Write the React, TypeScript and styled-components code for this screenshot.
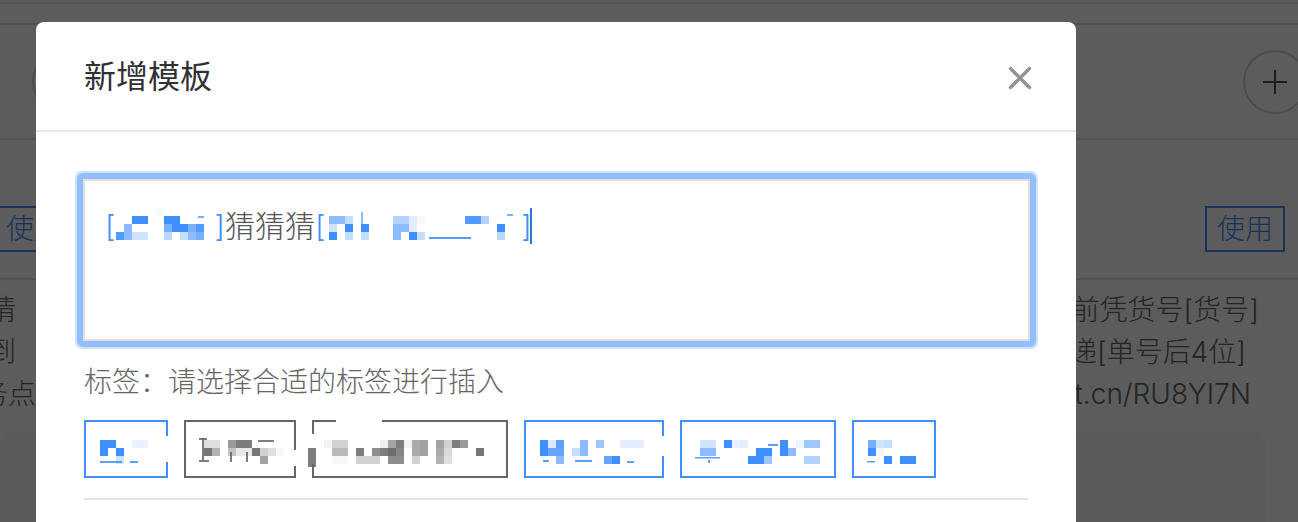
import React from "react";
import styled, { createGlobalStyle } from "styled-components";

const BLUE = "#3f8fff";
const GREY = "#666666";
const CJK = `Inter, "Noto Sans CJK SC", "Noto Sans", sans-serif`;

const GlobalStyle = createGlobalStyle`
  html, body {
    margin: 0;
    height: 100%;
    overflow: hidden;
    background: #ffffff;
    font-family: ${CJK};
    font-weight: 300;
  }
`;

const Page = styled.div`
  height: 522px;
  overflow: hidden;
  color: ${GREY};
`;

const TopStrip = styled.div<{ $height: number }>`
  height: ${(p) => p.$height}px;
  border-bottom: 2px solid #e0e0e0;
`;

const HeaderRow = styled.div`
  height: 113px;
  display: flex;
  align-items: center;
  justify-content: space-between;
  border-bottom: 2px solid #e0e0e0;
  padding-left: 32px;
  margin-right: -9px;
`;

const AddCircle = styled.div`
  width: 60px;
  height: 60px;
  border: 2px solid #d4d4d4;
  border-radius: 50%;
  display: flex;
  align-items: center;
  justify-content: center;
`;

const ActionRow = styled.div`
  height: 72px;
  padding-top: 66px;
  display: flex;
  align-items: flex-start;
  justify-content: space-between;
  border-bottom: 2px solid #e0e0e0;
  margin-left: -6px;
  padding-right: 13px;
`;

const UseButton = styled.div`
  box-sizing: border-box;
  width: 80px;
  height: 46px;
  border: 2px solid ${BLUE};
  color: ${BLUE};
  font-size: 28px;
  line-height: 42px;
  text-align: center;
`;

const TextRow = styled.div`
  padding-top: 9px;
  display: flex;
  justify-content: space-between;
`;

const TextColumn = styled.div<{ $width: number }>`
  width: ${(p) => p.$width}px;
  overflow: hidden;
`;

const TextLine = styled.div<{ $inset: number }>`
  display: flex;
  justify-content: flex-end;
  padding-right: ${(p) => p.$inset}px;
  font-size: 28px;
  line-height: 42px;
  height: 42px;
  white-space: nowrap;
`;

const BottomCard = styled.div`
  height: 200px;
  margin: 17px 33px 0 0;
  background: #f8f8f8;
  border-radius: 10px;
`;

const Overlay = styled.div`
  position: fixed;
  inset: 0;
  background: rgba(0, 0, 0, 0.64);
  padding: 22px 0 0 36px;
  overflow: hidden;
`;

const Modal = styled.div`
  width: 1040px;
  height: 700px;
  background: #ffffff;
  border-radius: 8px;
`;

const ModalHeader = styled.div`
  height: 106px;
  padding: 2px 44px 0 48px;
  display: flex;
  align-items: center;
  justify-content: space-between;
  border-bottom: 2px solid #e8e8e8;
`;

const ModalTitle = styled.div`
  font-size: 32px;
  line-height: 44px;
  font-weight: 400;
  color: #303133;
`;

const CloseIcon = styled.svg`
  display: block;
  width: 24px;
  height: 24px;
  margin-top: 2px;
`;

const ModalBody = styled.div`
  padding: 47px 48px 0 47px;
`;

const Editor = styled.div`
  box-sizing: border-box;
  width: 947px;
  height: 162px;
  border: 2px solid #dcdfe6;
  border-radius: 2px;
  box-shadow: 0 0 0 6px #92bffc, 0 0 0 8px #cfe2fe;
  padding: 25px 20px;
  font-size: 30px;
  line-height: 40px;
  color: #555555;
`;

const EditorLine = styled.div`
  height: 40px;
  display: flex;
  align-items: center;
  white-space: nowrap;
`;

const Bracket = styled.span`
  color: ${BLUE};
`;

const Caret = styled.span`
  width: 2px;
  height: 36px;
  background: #2f74d8;
  margin-left: -2px;
`;

const HintLabel = styled.div`
  margin: 21px 0 18px 1px;
  font-size: 28px;
  line-height: 40px;
  color: #666666;
  white-space: nowrap;
`;

const TagRow = styled.div`
  display: flex;
  gap: 16px;
  padding-left: 1px;
`;

const Tag = styled.div<{ $width: number; $color: string }>`
  position: relative;
  box-sizing: border-box;
  width: ${(p) => p.$width}px;
  height: 58px;
  border: 2px solid ${(p) => p.$color};
`;

const TagArt = styled.svg`
  position: absolute;
  top: -2px;
  left: -2px;
  width: calc(100% + 4px);
  height: 58px;
  overflow: visible;
`;

const Divider = styled.div`
  height: 2px;
  margin: 20px 0 0 1px;
  background: #e4e4e4;
`;

const InlineArt = styled.svg<{ $width: number }>`
  display: block;
  flex: none;
  width: ${(p) => p.$width}px;
  height: 40px;
  overflow: visible;
`;

// [column, row, strength] of a blurred-out cell
type Cell = [number, number, number];

const CELL = 8;

const Cells = ({
  cells,
  color,
  x,
  y,
}: {
  cells: Cell[];
  color: string;
  x: number;
  y: number;
}) => (
  <>
    {cells.map(([col, row, level], i) => (
      <rect
        key={i}
        x={x + col * CELL}
        y={y + row * CELL}
        width={CELL}
        height={CELL}
        fill={color}
        opacity={level}
      />
    ))}
  </>
);

const firstMosaic: Cell[] = [
  [5, 0, 0.05],
  [2, 1, 1], [3, 1, 1], [6, 1, 1], [7, 1, 1],
  [1, 2, 0.6], [6, 2, 0.7], [7, 2, 1], [8, 2, 1], [9, 2, 0.7], [10, 2, 0.9],
  [0, 3, 0.9], [1, 3, 0.6], [2, 3, 0.25], [3, 3, 0.25], [6, 3, 0.35], [8, 3, 0.3], [9, 3, 0.6], [10, 3, 0.7],
];

const secondMosaic: Cell[] = [
  [0, 1, 0.6], [1, 1, 0.6], [2, 1, 0.3], [8, 1, 0.4], [9, 1, 0.4], [10, 1, 0.15], [11, 1, 0.05],
  [17, 1, 0.9], [18, 1, 0.9], [19, 1, 0.4],
  [0, 2, 0.25], [2, 2, 1], [4, 2, 1], [8, 2, 0.6], [9, 2, 0.6], [10, 2, 0.15], [21, 2, 1],
  [0, 3, 1], [2, 3, 0.3], [4, 3, 0.3], [8, 3, 0.6], [10, 3, 1], [11, 3, 0.3], [21, 3, 0.35],
];

interface TagDef {
  width: number;
  color: string;
  originX: number;
  cells: Cell[];
  gaps: [number, number, number, number][];
  strokes?: [number, number, number, number][];
}

const tags: TagDef[] = [
  {
    width: 84,
    color: BLUE,
    originX: 16,
    cells: [
      [0, 0, 1], [1, 0, 1], [4, 0, 0.12], [5, 0, 0.12],
      [0, 1, 1], [2, 1, 1],
      [2, 2, 0.25],
    ],
    gaps: [[80, 16, 6, 26]],
    strokes: [[16, 41, 22, 2], [46, 41, 8, 2]],
  },
  {
    width: 112,
    color: GREY,
    originX: 20,
    cells: [
      [0, 0, 0.2], [1, 0, 0.2], [3, 0, 0.65], [4, 0, 0.85], [5, 0, 0.85],
      [0, 1, 0.9], [1, 1, 0.5], [3, 1, 0.4], [4, 1, 0.15], [5, 1, 0.15], [6, 1, 0.9], [7, 1, 0.3], [8, 1, 0.2], [9, 1, 0.05],
      [7, 2, 0.6],
    ],
    gaps: [[108, 30, 6, 16]],
    strokes: [
      [15, 18, 8, 2], [18, 18, 2, 22], [15, 40, 10, 2],
      [46, 32, 2, 10], [62, 32, 2, 10], [74, 20, 16, 2],
    ],
  },
  {
    width: 196,
    color: GREY,
    originX: 12,
    cells: [
      [0, 0, 0.08], [1, 0, 0.3], [2, 0, 0.3], [7, 0, 0.1], [8, 0, 0.6], [9, 0, 0.85], [10, 0, 0.08], [11, 0, 0.55], [12, 0, 0.6],
      [14, 0, 0.6], [15, 0, 0.3], [16, 0, 0.85], [17, 0, 0.65],
      [1, 1, 0.45], [2, 1, 0.45], [4, 1, 0.85], [6, 1, 0.75], [7, 1, 0.85], [8, 1, 0.95], [9, 1, 0.8], [11, 1, 0.55], [12, 1, 0.6],
      [14, 1, 0.55], [15, 1, 0.25], [19, 1, 0.9],
      [1, 2, 0.05], [2, 2, 0.05], [4, 2, 0.3], [5, 2, 0.3], [6, 2, 0.3], [8, 2, 0.75], [9, 2, 0.75], [11, 2, 0.3], [14, 2, 0.5], [15, 2, 0.2],
    ],
    gaps: [
      [24, -2, 46, 6],
      [-2, 14, 6, 30],
    ],
    strokes: [[-4, 28, 8, 19]],
  },
  {
    width: 140,
    color: BLUE,
    originX: 16,
    cells: [
      [0, 0, 1], [1, 0, 0.2], [2, 0, 0.85], [5, 0, 0.6], [7, 0, 0.5], [10, 0, 0.15], [11, 0, 0.15], [12, 0, 0.15],
      [0, 1, 1], [1, 1, 0.8], [2, 1, 0.8], [4, 1, 0.3], [5, 1, 0.6],
      [2, 2, 0.6], [8, 2, 0.8], [9, 2, 1],
    ],
    gaps: [[136, 16, 6, 20]],
    strokes: [[19, 40, 6, 2], [51, 40, 17, 2], [103, 41, 7, 2]],
  },
  {
    width: 156,
    color: BLUE,
    originX: 20,
    cells: [
      [0, 0, 0.25], [1, 0, 0.25], [3, 0, 1], [4, 0, 0.12], [5, 0, 0.15], [10, 0, 1], [12, 0, 0.1], [13, 0, 0.5], [14, 0, 0.5],
      [0, 1, 0.6], [1, 1, 0.6], [7, 1, 1], [8, 1, 1], [10, 1, 1], [11, 1, 0.6],
      [6, 2, 1], [7, 2, 1], [8, 2, 0.5], [13, 2, 0.4], [14, 2, 0.4],
    ],
    gaps: [],
    strokes: [[15, 37, 25, 1.5], [28, 40, 2, 3], [88, 24, 10, 2]],
  },
  {
    width: 84,
    color: BLUE,
    originX: 16,
    cells: [
      [0, 0, 0.7], [1, 0, 0.25], [2, 0, 0.3],
      [0, 1, 1], [1, 1, 0.08],
      [2, 2, 1], [4, 2, 1], [5, 2, 1],
    ],
    gaps: [],
    strokes: [[15, 41, 8, 1.5]],
  },
];

const App = (): React.ReactElement => {
  return (
    <>
      <GlobalStyle />
      <Page>
        <TopStrip $height={2} />
        <TopStrip $height={19} />
        <HeaderRow>
          <AddCircle />
          <AddCircle>
            <svg width="26" height="26" viewBox="0 0 26 26">
              <path d="M13 1v24M1 13h24" stroke="#505050" strokeWidth="2" fill="none" />
            </svg>
          </AddCircle>
        </HeaderRow>
        <ActionRow>
          <UseButton>使用</UseButton>
          <UseButton>使用</UseButton>
        </ActionRow>
        <TextRow>
          <TextColumn $width={36}>
            <TextLine $inset={20}>猜</TextLine>
            <TextLine $inset={20}>到</TextLine>
            <TextLine $inset={0}>务点</TextLine>
          </TextColumn>
          <TextColumn $width={230}>
            <TextLine $inset={39}>前凭货号[货号]</TextLine>
            <TextLine $inset={52}>递[单号后4位]</TextLine>
            <TextLine $inset={47}>t.cn/RU8YI7N</TextLine>
          </TextColumn>
        </TextRow>
        <BottomCard />
      </Page>

      <Overlay>
        <Modal>
          <ModalHeader>
            <ModalTitle>新增模板</ModalTitle>
            <CloseIcon viewBox="0 0 24 24">
              <path
                d="M2.5 2.5l19 19M21.5 2.5l-19 19"
                stroke="#909399"
                strokeWidth="3.4"
                strokeLinecap="round"
                fill="none"
              />
            </CloseIcon>
          </ModalHeader>
          <ModalBody>
            <Editor>
              <EditorLine>
                <Bracket>[</Bracket>
                <InlineArt $width={99}>
                  <Cells cells={firstMosaic} color={BLUE} x={1} y={2} />
                  <rect x={83} y={10} width={6} height={2} fill={BLUE} opacity={0.7} />
                </InlineArt>
                <Bracket>]</Bracket>
                猜猜猜
                <Bracket>[</Bracket>
                <InlineArt $width={196}>
                  <Cells cells={secondMosaic} color={BLUE} x={4} y={2} />
                  <rect x={36} y={6} width={2} height={14} fill={BLUE} opacity={0.6} />
                  <rect x={104} y={31} width={42} height={2} fill={BLUE} opacity={0.9} />
                  <rect x={182} y={8} width={6} height={2} fill={BLUE} opacity={0.7} />
                </InlineArt>
                <Bracket>]</Bracket>
                <Caret />
              </EditorLine>
            </Editor>
            <HintLabel>标签：请选择合适的标签进行插入</HintLabel>
            <TagRow>
              {tags.map((tag, i) => (
                <Tag key={i} $width={tag.width} $color={tag.color}>
                  <TagArt>
                    {tag.gaps.map(([x, y, w, h], g) => (
                      <rect key={g} x={x} y={y} width={w} height={h} fill="#ffffff" />
                    ))}
                    <Cells cells={tag.cells} color={tag.color} x={tag.originX} y={20} />
                    {(tag.strokes || []).map(([x, y, w, h], s) => (
                      <rect key={s} x={x} y={y} width={w} height={h} fill={tag.color} opacity={0.85} />
                    ))}
                  </TagArt>
                </Tag>
              ))}
            </TagRow>
            <Divider />
          </ModalBody>
        </Modal>
      </Overlay>
    </>
  );
};

export default App;
